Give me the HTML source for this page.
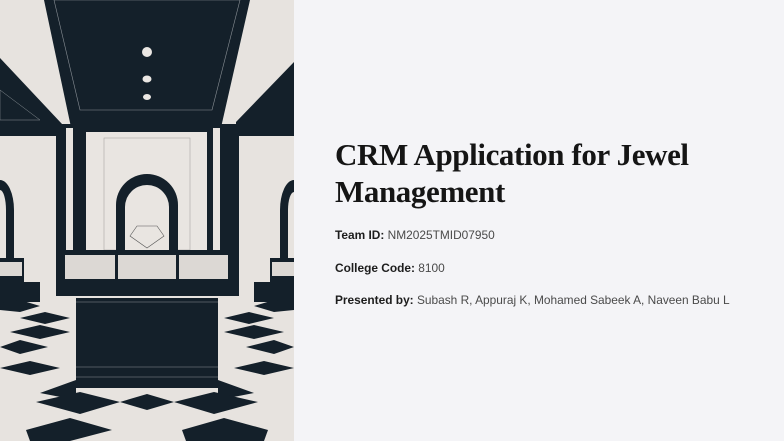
<!DOCTYPE html>
<html><head><meta charset="utf-8"><style>
html,body{margin:0;padding:0;width:784px;height:441px;overflow:hidden;background:#f4f4f7;}
.art{position:absolute;left:0;top:0;width:294px;height:441px;}
.t{position:absolute;left:335px;top:136px;font-family:"Liberation Serif",serif;font-weight:bold;font-size:31px;line-height:37px;color:#151515;letter-spacing:-0.4px;}
.p{position:absolute;left:335px;font-family:"Liberation Sans",sans-serif;font-size:11.9px;color:#4a4a4a;white-space:nowrap;}
.p b{color:#1d1d1d;}
</style></head><body>
<svg class="art" viewBox="0 0 294 441" xmlns="http://www.w3.org/2000/svg">
<rect width="294" height="441" fill="#e7e3df"/>
<polygon points="44,0 250,0 220,132 72,132" fill="#14202a"/>
<polygon points="54,0 240,0 212,110 80,110" fill="none" stroke="#8a9096" stroke-width="0.6"/>
<polygon points="0,58 62,124 62,136 0,136" fill="#14202a"/>
<polygon points="0,90 40,120 0,120" fill="none" stroke="#8a9096" stroke-width="0.5"/>
<polygon points="294,62 236,122 236,136 294,136" fill="#14202a"/>
<circle cx="147" cy="52" r="5" fill="#ebe7e3"/>
<ellipse cx="147" cy="79" rx="4.5" ry="3.5" fill="#ebe7e3"/>
<ellipse cx="147" cy="97" rx="4" ry="3" fill="#ebe7e3"/>
<rect x="56" y="124" width="30" height="172" fill="#14202a"/>
<rect x="66" y="128" width="7" height="168" fill="#e7e3df"/>
<rect x="207" y="124" width="32" height="172" fill="#14202a"/>
<rect x="213" y="128" width="7" height="168" fill="#e7e3df"/>
<rect x="86" y="132" width="121" height="120" fill="#e9e5e1"/>
<rect x="104" y="138" width="86" height="112" fill="none" stroke="#a9a7a5" stroke-width="0.6"/>
<path d="M116,252 V205 A31,31 0 0 1 178,205 V252 Z" fill="#14202a"/>
<path d="M125,252 V207 A22,22 0 0 1 169,207 V252 Z" fill="#e9e5e1"/>
<path d="M130,236 L137,226 H157 L164,236 L147,248 Z" fill="none" stroke="#555" stroke-width="0.6"/>
<path d="M0,180 A14,30 0 0 1 14,210 V270 H0 Z" fill="#14202a"/>
<path d="M0,190 A6,20 0 0 1 6,210 V262 H0 Z" fill="#e7e3df"/>
<path d="M294,180 A14,30 0 0 0 280,210 V270 H294 Z" fill="#14202a"/>
<path d="M294,192 A6,18 0 0 0 288,210 V262 H294 Z" fill="#e7e3df"/>
<rect x="0" y="258" width="24" height="45" fill="#14202a"/>
<rect x="0" y="262" width="22" height="14" fill="#dcd8d4"/>
<rect x="22" y="282" width="18" height="20" fill="#14202a"/>
<rect x="270" y="258" width="24" height="45" fill="#14202a"/>
<rect x="272" y="262" width="22" height="14" fill="#dcd8d4"/>
<rect x="254" y="282" width="18" height="20" fill="#14202a"/>
<g fill="#14202a">
<polygon points="0,303 20,300 40,306 20,312 0,310"/>
<polygon points="254,306 274,300 294,303 294,310 274,312"/>
<polygon points="20,318 45,312 70,318 45,324"/>
<polygon points="224,318 249,312 274,318 249,324"/>
<polygon points="10,332 40,325 70,332 40,339"/>
<polygon points="224,332 254,325 284,332 254,339"/>
<polygon points="0,347 20,340 48,347 20,354"/>
<polygon points="246,347 274,340 294,347 274,354"/>
<polygon points="0,368 30,361 60,368 30,375"/>
<polygon points="234,368 264,361 294,368 264,375"/>
<polygon points="40,393 76,380 76,400"/>
<polygon points="218,380 254,393 218,400"/>
<polygon points="36,402 80,392 120,402 80,414"/>
<polygon points="120,402 147,394 174,402 147,410"/>
<polygon points="174,402 214,392 258,402 214,414"/>
<polygon points="26,430 70,418 112,430 70,441 30,441"/>
<polygon points="182,430 224,418 268,430 264,441 186,441"/>
</g>
<rect x="57" y="250" width="178" height="46" fill="#14202a"/>
<rect x="65" y="255" width="50" height="24" fill="#dcd8d4"/>
<rect x="118" y="255" width="58" height="24" fill="#dcd8d4"/>
<rect x="179" y="255" width="49" height="24" fill="#dcd8d4"/>
<rect x="76" y="298" width="142" height="90" fill="#14202a"/>
<line x1="76" y1="302" x2="218" y2="302" stroke="#8a9096" stroke-width="0.6"/>
<line x1="76" y1="367" x2="218" y2="367" stroke="#8a9096" stroke-width="0.6"/>
<line x1="76" y1="377" x2="218" y2="377" stroke="#8a9096" stroke-width="0.6"/>
</svg>
<div class="t">CRM Application for Jewel<br>Management</div>
<div class="p" style="top:228px"><b>Team ID:</b> NM2025TMID07950</div>
<div class="p" style="top:261px"><b>College Code:</b> 8100</div>
<div class="p" style="top:293px"><b>Presented by:</b> Subash R, Appuraj K, Mohamed Sabeek A, Naveen Babu L</div>
</body></html>
